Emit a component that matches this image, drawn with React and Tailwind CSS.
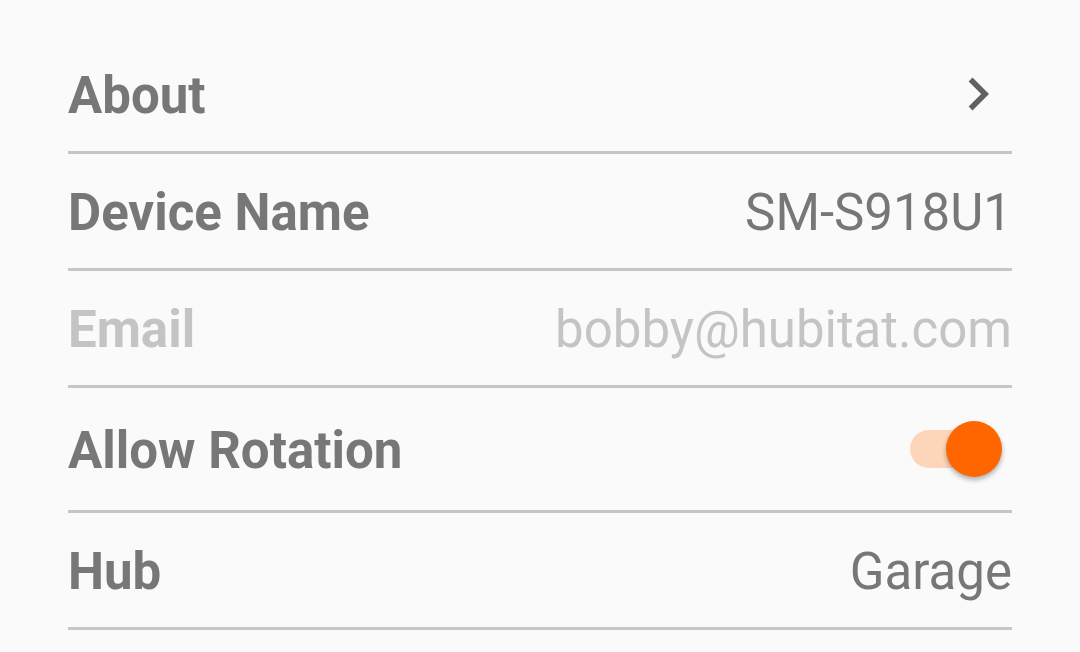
export default function App() {
  const rowCls = "flex items-center justify-between border-b-[3px] border-[#c6c6c6]";
  const label = "pt-[5px] text-[51px] font-bold";
  const value = "pt-[5px] text-[51px]";
  return (
    <div
      className="w-[1080px] h-[652px] bg-[#fafafa] px-[68px] pt-[37px] overflow-hidden"
      style={{ fontFamily: "Roboto, 'Noto Sans', sans-serif" }}
    >
      <div className={`${rowCls} h-[117px]`}>
        <span className={`${label} text-[#777777]`}>About</span>
        <svg className="w-[66px] h-[66px] mr-[1px]" viewBox="0 0 24 24" fill="#616161">
          <path d="M10 6L8.59 7.41 13.17 12l-4.58 4.59L10 18l6-6z" />
        </svg>
      </div>
      <div className={`${rowCls} h-[117px]`}>
        <span className={`${label} text-[#777777]`}>Device Name</span>
        <span className={`${value} text-[#777777]`}>SM-S918U1</span>
      </div>
      <div className={`${rowCls} h-[117px]`}>
        <span className={`${label} text-[#c4c4c4]`}>Email</span>
        <span className={`${value} text-[#c4c4c4]`}>bobby@hubitat.com</span>
      </div>
      <div className={`${rowCls} h-[125px]`}>
        <span className={`${label} text-[#777777]`}>Allow Rotation</span>
        <div className="relative w-[92px] h-[56px] mr-[10px] flex items-center">
          <div className="w-[88px] h-[38px] rounded-full bg-[#fdd5ba]" />
          <div className="absolute right-0 top-0 w-[56px] h-[56px] rounded-full bg-[#ff6600] shadow-[0_3px_5px_rgba(0,0,0,0.3)]" />
        </div>
      </div>
      <div className={`${rowCls} h-[117px]`}>
        <span className={`${label} text-[#777777]`}>Hub</span>
        <span className={`${value} text-[#777777]`}>Garage</span>
      </div>
    </div>
  );
}
